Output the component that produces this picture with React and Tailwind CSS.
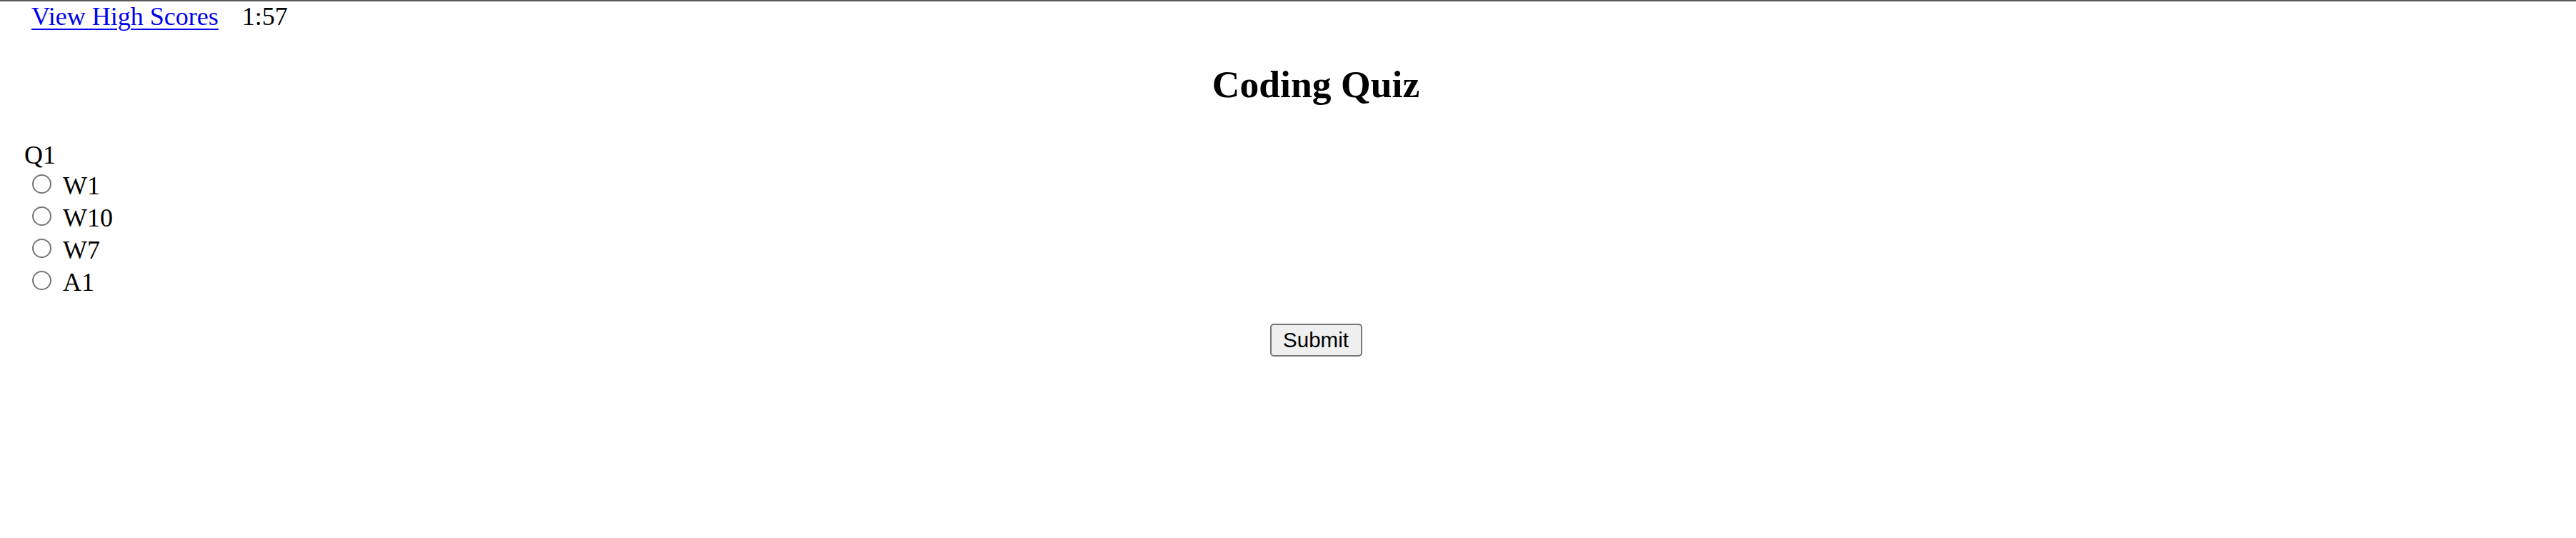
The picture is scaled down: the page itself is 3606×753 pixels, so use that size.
import { useState } from "react";

const options = ["W1", "W10", "W7", "A1"];

export default function App() {
  const [picked, setPicked] = useState("");

  return (
    <div className="min-h-screen bg-white border-t-2 border-[#5b5b5b] text-black font-['Liberation_Serif','Times_New_Roman',serif] text-[36px]">
      <div className="flex items-baseline pl-[44px] gap-[33px] leading-[41px] mt-[1px]">
        <a href="#" className="text-[#0000ee] underline decoration-[2px] underline-offset-[5px]">View High Scores</a>
        <span>1:57</span>
      </div>

      <div className="pl-[78px] mt-[44px]">
        <h2 className="text-center font-bold text-[53.6px] leading-[61px]">Coding Quiz</h2>
      </div>

      <div className="pl-[34px] mt-[48px]">
        <div className="leading-[41px]">Q1</div>
        <div className="flex flex-col">
          {options.map((o) => (
            <label key={o} className="flex items-start h-[45px] leading-[45px] pl-[11px] cursor-pointer">
              <input
                type="radio"
                name="q1"
                checked={picked === o}
                onChange={() => setPicked(o)}
                className="appearance-none w-[27px] h-[27px] mt-[6px] rounded-full border-2 border-[#767676] bg-white checked:border-[8px] checked:border-[#0075ff] shrink-0"
              />
              <span className="ml-[16px]">{o}</span>
            </label>
          ))}
        </div>
      </div>

      <div className="pl-[78px] mt-[35px] flex justify-center">
        <button className="w-[129px] h-[46px] bg-[#efefef] border-2 border-[#767676] rounded-[5px] font-['Liberation_Sans',Arial,sans-serif] text-[29.5px] leading-none">
          Submit
        </button>
      </div>
    </div>
  );
}
